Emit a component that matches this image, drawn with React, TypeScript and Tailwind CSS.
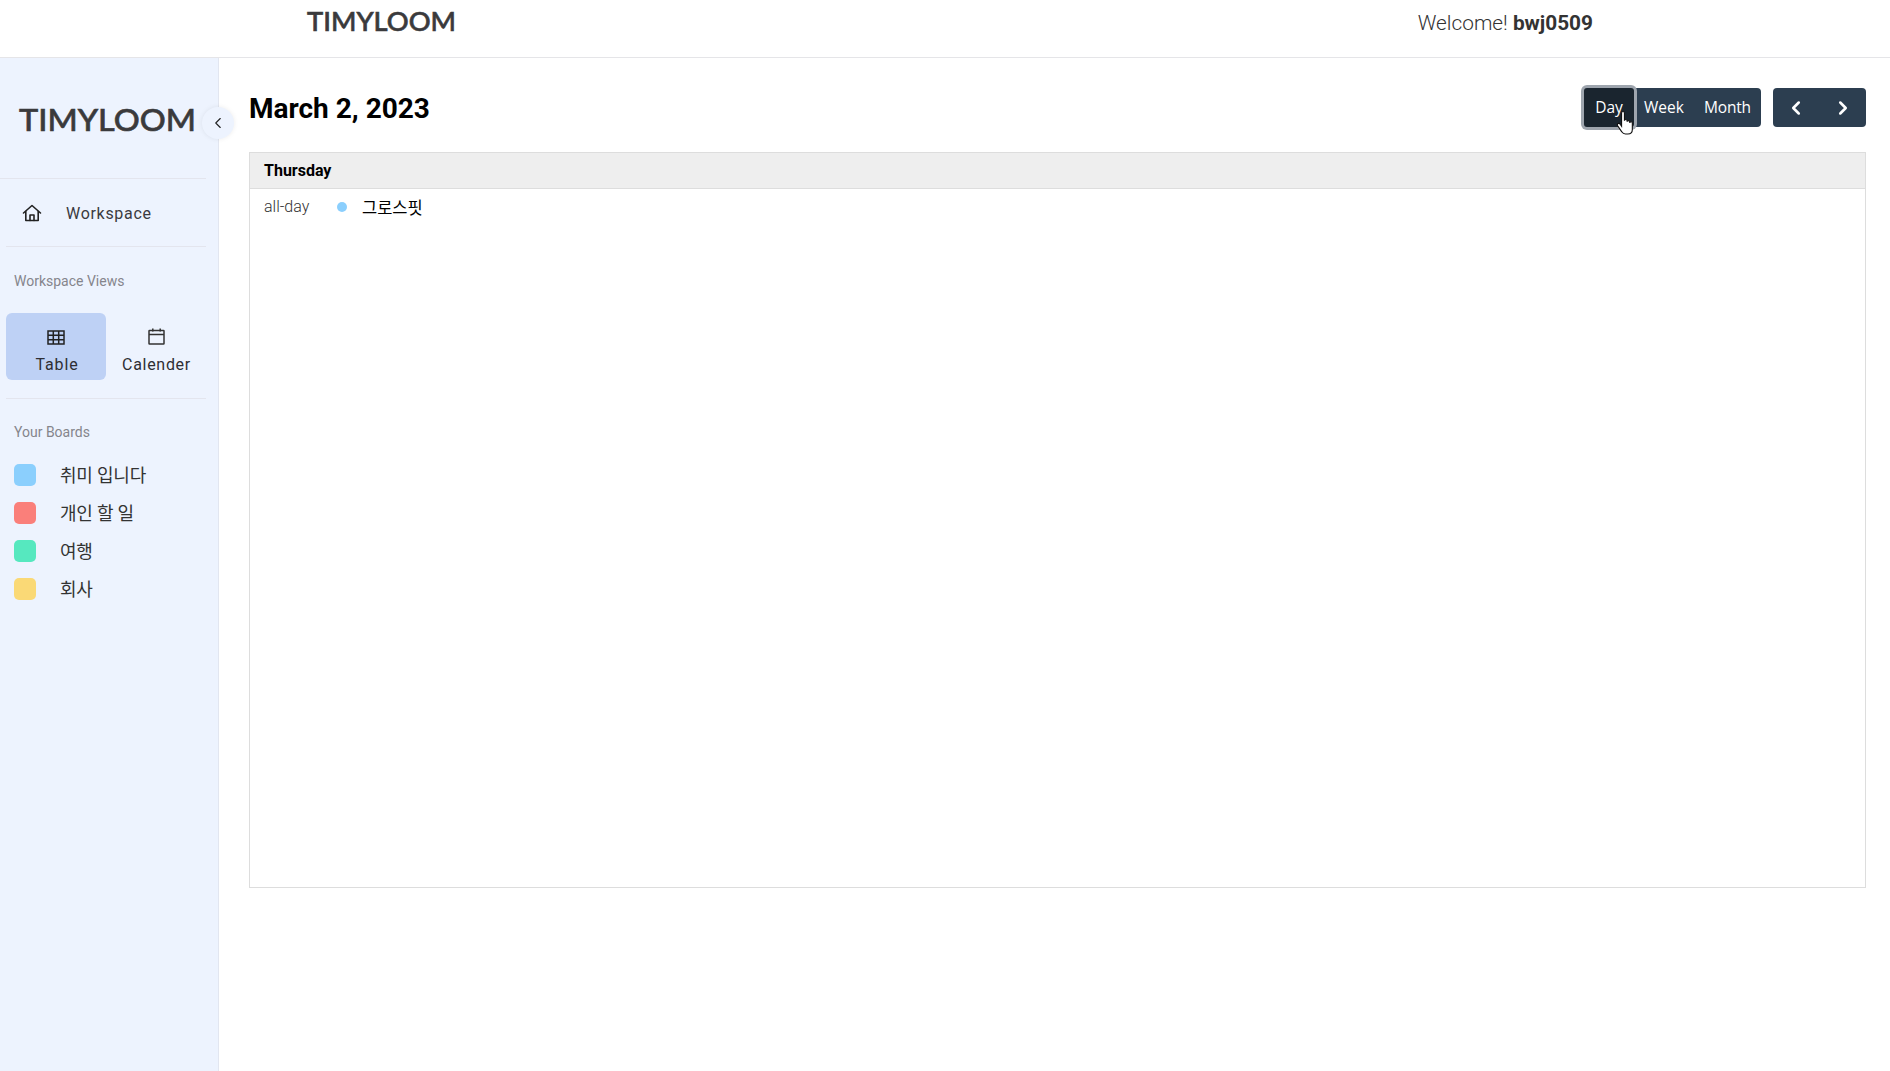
import { ChevronLeft, ChevronRight } from "lucide-react";

const boards = [
  { title: "취미 입니다", color: "bg-[#8bcffd]" },
  { title: "개인 할 일", color: "bg-[#fa7f7a]" },
  { title: "여행", color: "bg-[#56e8bf]" },
  { title: "회사", color: "bg-[#fad976]" },
];

const Logo = ({ size }: { size: string }) => (
  <span className={`font-['Lato',sans-serif] font-medium leading-none text-[#3a3a3c] [-webkit-text-stroke:0.6px_#3a3a3c] origin-left inline-block ${size}`}>
    TIMYLOOM
  </span>
);

const HomeIcon = () => (
  <svg width="20" height="20" viewBox="0 0 20 20" fill="none" stroke="#222" strokeWidth="1.6" strokeLinejoin="round" strokeLinecap="round">
    <path d="M1.500 10 10 2.500l8.500 7.500" />
    <path d="M3.800 8.500V17.500h12.400V8.500" />
    <path d="M8 17.500v-5.500h4v5.500" />
  </svg>
);

const TableIcon = () => (
  <svg width="18" height="15" viewBox="0 0 18 15" fill="none" stroke="#222" strokeWidth="1.500">
    <rect x="1" y="1" width="16" height="13" />
    <path d="M1 5.300h16M1 9.700h16M6.300 1v13M11.700 1v13" />
  </svg>
);

const CalendarIcon = () => (
  <svg width="17" height="17" viewBox="0 0 17 17" fill="none" stroke="#333" strokeWidth="1.500">
    <rect x="1" y="2.500" width="15" height="13.500" rx="0.500" />
    <path d="M1 6.500h15M4.800 0.500v3M12.200 0.500v3" />
  </svg>
);

export default function App() {
  return (
    <div className="h-[1071px] flex flex-col overflow-hidden bg-white font-['Roboto','Noto_Sans_CJK_KR',sans-serif]">
      {/* Header */}
      <div id="header" className="h-[58px] shrink-0 flex justify-between items-start border-b border-b-[#e5e5e8] pl-[307px] pr-[297px]">
        <div className="w-[149px] mt-[8px]">
          <Logo size="text-[26px] scale-x-[1.05]" />
        </div>
        <p className="mt-[8px] text-[20.800px] font-light text-[#333333]">
          Welcome! <span className="font-bold">bwj0509</span>
        </p>
      </div>

      <div className="flex flex-1 min-h-0">
        {/* Sidebar */}
        <div id="sidebar" className="relative w-[219px] shrink-0 bg-[#edf3fe] border-r border-r-[#e2e6f0] flex flex-col">
          <div className="h-[121px] pl-[19px] pt-[46px] shrink-0 border-b border-b-[#e3e5ee] mr-[12px]">
            <Logo size="text-[30px] scale-x-[1.08]" />
          </div>
          <button className="absolute right-[-16px] top-[49px] w-8 h-8 rounded-full bg-[#edf3fe] flex items-center justify-center shadow-[0_0_5px_rgba(0,0,0,0.08)]">
            <ChevronLeft size={18} strokeWidth={1.500} color="#222" />
          </button>

          <div className="mx-[6px] w-[200px] h-[68px] shrink-0 border-b border-b-[#e3e5ee] flex items-center gap-[24px] pl-[16px]">
            <HomeIcon />
            <span className="text-[16px] tracking-[0.7px] text-[#3a3a40] mt-[2px]">Workspace</span>
          </div>

          <p className="ml-[14px] mt-[25px] text-[14px] leading-[18px] text-[#85858c]">Workspace Views</p>
          <div className="mx-[6px] w-[200px] mt-[23px] pb-[18px] border-b border-b-[#e3e5ee] flex">
            <div className="w-[100px] h-[67px] rounded-[6px] bg-[#bed1f5] flex flex-col items-center pt-[16px] pl-[2px]">
              <span className="h-[17px] flex items-center -ml-[2px]"><TableIcon /></span>
              <span className="mt-[9px] text-[16px] leading-[20px] tracking-[0.9px] text-[#2e2e33]">Table</span>
            </div>
            <div className="w-[100px] h-[67px] flex flex-col items-center pt-[15px] pl-[1px]">
              <span className="h-[18px] flex items-center -mt-[1px]"><CalendarIcon /></span>
              <span className="mt-[10px] text-[16px] leading-[20px] tracking-[0.7px] text-[#2e2e33]">Calender</span>
            </div>
          </div>

          <p className="ml-[14px] mt-[24px] text-[14px] leading-[18px] text-[#85858c]">Your Boards</p>
          <div className="mt-[23px] ml-[14px] flex flex-col gap-[16px]">
            {boards.map((board) => (
              <div key={board.title} className="flex items-center gap-[24px] h-[22px]">
                <span className={`w-[22px] h-[22px] rounded-[5px] ${board.color}`} />
                <span className="text-[18px] tracking-[-0.2px] text-[#333333]">{board.title}</span>
              </div>
            ))}
          </div>
        </div>

        {/* Calendar */}
        <div id="main" className="flex-1 pl-[30px] pr-[24px] pt-[30px]">
          <div className="flex justify-between items-center h-[40px]">
            <h1 className="text-[28px] font-bold text-black leading-none mt-[1px]">March 2, 2023</h1>
            <div className="flex gap-[12px] -mt-[1px]">
              <div className="relative flex h-[39px] rounded-[4px] bg-[#2c3e50] text-[15.500px] text-white font-['Open_Sans',sans-serif]">
                <button className="relative w-[50px] rounded-[3px] bg-[#1a252f] ring-[3px] ring-[#9ea5ae]">Day</button>
                <button className="w-[58px] pl-[2px]">Week</button>
                <button className="w-[69px] pl-[2px] -tracking-[0.2px]">Month</button>
                <svg className="absolute left-[32px] top-[22px]" width="20" height="27" viewBox="0 0 18 24">
                  <path d="M5 2.500c0-1.800 2.600-1.800 2.600 0v7c0-1.500 2.400-1.500 2.400 0v1c0-1.500 2.400-1.500 2.400 0v1c0-1.400 2.300-1.400 2.300 0v6c0 2.500-1.500 4-4 4H8.500c-1.500 0-2.500-.7-3.300-2L1.500 14c-1-1.700 1.300-3 2.300-1.300L5 14.500z" fill="white" stroke="#111" strokeWidth="1" />
                </svg>
              </div>
              <div className="flex h-[39px] w-[93px] rounded-[4px] bg-[#2c3e50] text-white">
                <button className="w-1/2 flex items-center justify-center">
                  <ChevronLeft size={22} strokeWidth={2.800} />
                </button>
                <button className="w-1/2 flex items-center justify-center">
                  <ChevronRight size={22} strokeWidth={2.800} />
                </button>
              </div>
            </div>
          </div>

          <div className="mt-[24px] h-[736px] border border-[#dddddd]">
            <div className="h-[36px] bg-[#eeeeee] border-b border-b-[#dddddd] flex items-center pl-[14px] text-[16px] font-bold text-black">
              Thursday
            </div>
            <div className="flex items-center h-[36px] pl-[14px]">
              <span className="w-[73px] text-[16px] font-light text-[#333333] -mt-[1px]">all-day</span>
              <span className="w-[10px] h-[10px] rounded-full bg-[#8bcffd] -mt-[1px]" />
              <span className="ml-[15px] mt-[4px] text-[16.500px] text-black">그로스핏</span>
            </div>
          </div>
        </div>
      </div>
    </div>
  );
}
